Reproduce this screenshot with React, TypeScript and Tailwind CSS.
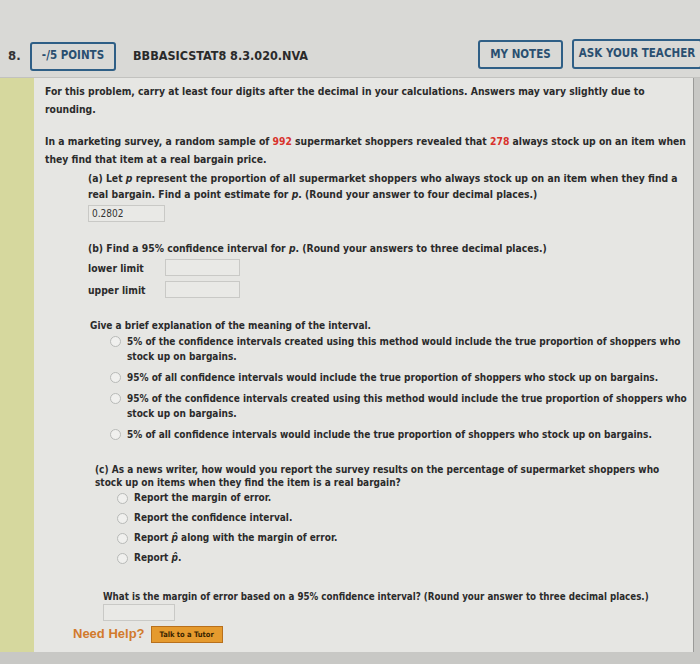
import React from "react";

const font = { fontFamily: '"DejaVu Sans Condensed", "DejaVu Sans", Verdana, sans-serif' };

function Radio() {
  return <span className="inline-block w-[11px] h-[11px] rounded-full border border-[#b8bab8] bg-[#f0f0ee] shrink-0 mt-[2px]" />;
}

function Box({ w, text }: { w: string; text?: string }) {
  return (
    <div className={`${w} h-[17px] border border-[#c9c9c6] bg-[#e9e9e6] text-[10px] leading-[15px] pl-[3px] font-normal text-[#333]`}>{text}</div>
  );
}

function Option({ children }: { children: React.ReactNode }) {
  return (
    <div className="flex gap-[6px]">
      <Radio />
      <div>{children}</div>
    </div>
  );
}

const P = () => <i className="font-bold">p&#770;</i>;

export default function App() {
  return (
    <div style={font} className="w-[700px] h-[664px] bg-[#c8c8c5] overflow-hidden text-[#2b2b2b]">
      <div className="h-[78px] bg-[#d9d9d6] flex items-end pb-[4px] border-b border-[#c2c2bf]">
        <div className="flex items-center w-full">
          <span className="ml-[8px] w-[22px] text-[13px] font-bold text-[#333]">8.</span>
          <div className="w-[86px] h-[29px] border-2 border-[#2f5f86] rounded-[3px] flex items-center justify-center text-[11.5px] font-bold text-[#2a4f70]">-/5 POINTS</div>
          <span className="ml-[17px] text-[12.5px] font-bold text-[#2a2a2a]">BBBASICSTAT8 8.3.020.NVA</span>
          <div className="ml-auto mb-[3px] w-[85px] h-[29px] border-2 border-[#2f5f86] rounded-[3px] flex items-center justify-center text-[11.5px] font-bold text-[#2a4f70]">MY NOTES</div>
          <div className="ml-[9px] mb-[4px] w-[130px] h-[30px] border-2 border-[#2f5f86] rounded-[3px] flex items-center justify-center text-[11.5px] font-bold text-[#2a4f70] -mr-[2px]">ASK YOUR TEACHER</div>
        </div>
      </div>
      <div className="flex h-[574px]">
        <div className="w-[34px] bg-[#d6d89e]" />
        <div className="w-[660px] bg-[#e6e6e3] border-r border-[#9a9a98] text-[10.3px] leading-[18px] font-bold pt-[4px]">
          <p className="ml-[11px] mr-[30px]">
            For this problem, carry at least four digits after the decimal in your calculations. Answers may vary slightly due to rounding.
          </p>
          <p className="ml-[11px] mt-[14px] -mr-[8px]">
            In a marketing survey, a random sample of <span className="text-[#d8322c]">992</span> supermarket shoppers revealed that <span className="text-[#d8322c]">278</span> always stock up on an item when they find that item at a real bargain price.
          </p>
          <div className="ml-[54px] mr-[4px] mt-[2px] leading-[16px]">
            <p>
              (a) Let <i>p</i> represent the proportion of all supermarket shoppers who always stock up on an item when they find a real bargain. Find a point estimate for <i>p</i>. (Round your answer to four decimal places.)
            </p>
            <div className="mt-[3px]"><Box w="w-[77px]" text="0.2802" /></div>
            <p className="mt-[18px]">(b) Find a 95% confidence interval for <i>p</i>. (Round your answers to three decimal places.)</p>
            <div className="flex items-center mt-[3px]">
              <span className="w-[77px]">lower limit</span>
              <Box w="w-[75px]" />
            </div>
            <div className="flex items-center mt-[5px]">
              <span className="w-[77px]">upper limit</span>
              <Box w="w-[75px]" />
            </div>
          </div>
          <div className="ml-[56px] -mr-[10px] mt-[20px] leading-[15px] text-[10px]">
            <p>Give a brief explanation of the meaning of the interval.</p>
            <div className="ml-[20px] mt-[1px] flex flex-col gap-[6px]">
              <Option>5% of the confidence intervals created using this method would include the true proportion of shoppers who stock up on bargains.</Option>
              <Option>95% of all confidence intervals would include the true proportion of shoppers who stock up on bargains.</Option>
              <Option>95% of the confidence intervals created using this method would include the true proportion of shoppers who stock up on bargains.</Option>
              <Option>5% of all confidence intervals would include the true proportion of shoppers who stock up on bargains.</Option>
            </div>
          </div>
          <div className="ml-[61px] mr-[20px] mt-[21px] leading-[13px] text-[10px]">
            <p>(c) As a news writer, how would you report the survey results on the percentage of supermarket shoppers who stock up on items when they find the item is a real bargain?</p>
            <div className="ml-[22px] mt-[2px] flex flex-col gap-[7px]">
              <Option>Report the margin of error.</Option>
              <Option>Report the confidence interval.</Option>
              <Option>Report <P /> along with the margin of error.</Option>
              <Option>Report <P />.</Option>
            </div>
          </div>
          <div className="ml-[69px] mt-[26px] leading-[13px] text-[9.7px]">
            <p>What is the margin of error based on a 95% confidence interval? (Round your answer to three decimal places.)</p>
            <div className="mt-[1px]"><Box w="w-[72px]" /></div>
          </div>
          <div className="ml-[39px] mt-[4px] flex items-center gap-[6px]">
            <span className="text-[13px] font-bold text-[#d27a2c]" style={{ fontFamily: '"Liberation Sans", Arial, sans-serif' }}>Need Help?</span>
            <span className="h-[17px] px-[8px] bg-[#e59a2e] border border-[#b8701c] text-[7.5px] leading-[15px] font-bold text-[#3a2400]">Talk to a Tutor</span>
          </div>
        </div>
      </div>
    </div>
  );
}
